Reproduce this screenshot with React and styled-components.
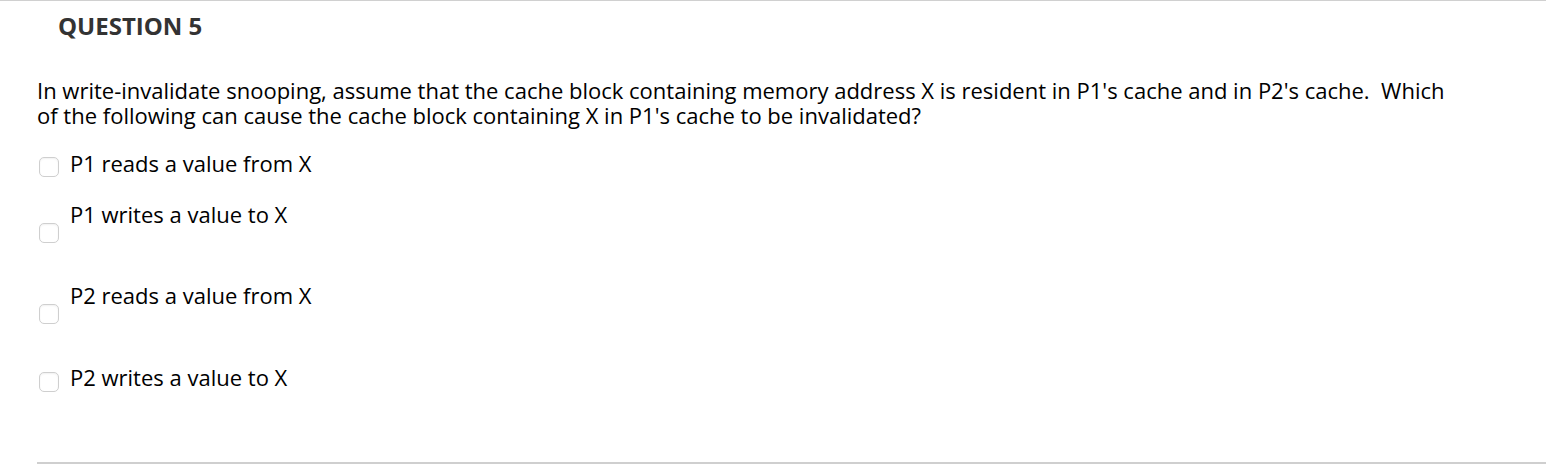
import React from "react";
import styled, { createGlobalStyle } from "styled-components";

const Global = createGlobalStyle`
  html, body { margin: 0; padding: 0; background: #fff; }
  body { font-family: "Open Sans", "Noto Sans", sans-serif; color: #000; }
`;

const Page = styled.div`
  width: 1546px;
  height: 464px;
  box-sizing: border-box;
  border-top: 1px solid #d0d0d0;
  display: flex;
  flex-direction: column;
`;

const Heading = styled.h2`
  margin: 0;
  padding: 10px 0 0 58px;
  font-size: 24px;
  line-height: 30px;
  font-weight: 700;
  color: #333;
`;

const Body = styled.div`
  margin-left: 37px;
  flex: 1;
  border-bottom: 2px solid #cfcfcf;
  display: flex;
  flex-direction: column;
`;

const Prompt = styled.p`
  margin: 37px 0 0 0;
  font-size: 22px;
  line-height: 25px;
  width: 1430px;
`;

const Options = styled.ul`
  list-style: none;
  margin: 23px 0 0 0;
  padding: 0;
  display: flex;
  flex-direction: column;
`;

const Row = styled.li`
  display: flex;
  align-items: flex-start;
  height: ${(p) => p.$h}px;
`;

const Box = styled.span`
  box-sizing: border-box;
  width: 20px;
  height: 20px;
  margin-left: 2px;
  margin-top: ${(p) => p.$top}px;
  border: 1px solid #cfcfcf;
  border-radius: 5px;
  background: #fff;
  box-shadow: inset 0 1px 2px rgba(0, 0, 0, 0.06);
  flex: none;
`;

const Label = styled.span`
  margin-left: 11px;
  font-size: 22px;
  line-height: 25px;
`;

const options = [
  { text: "P1 reads a value from X", h: 51, top: 6 },
  { text: "P1 writes a value to X", h: 81, top: 21 },
  { text: "P2 reads a value from X", h: 82, top: 21 },
  { text: "P2 writes a value to X", h: 40, top: 7 },
];

export default function App() {
  return (
    <>
      <Global />
      <Page>
        <Heading>QUESTION 5</Heading>
        <Body>
          <Prompt>
            In write-invalidate snooping, assume that the cache block containing memory address X is
            resident in P1's cache and in P2's cache.&nbsp; Which of the following can cause the cache
            block containing X in P1's cache to be invalidated?
          </Prompt>
          <Options>
            {options.map((o) => (
              <Row key={o.text} $h={o.h}>
                <Box $top={o.top} />
                <Label>{o.text}</Label>
              </Row>
            ))}
          </Options>
        </Body>
      </Page>
    </>
  );
}
